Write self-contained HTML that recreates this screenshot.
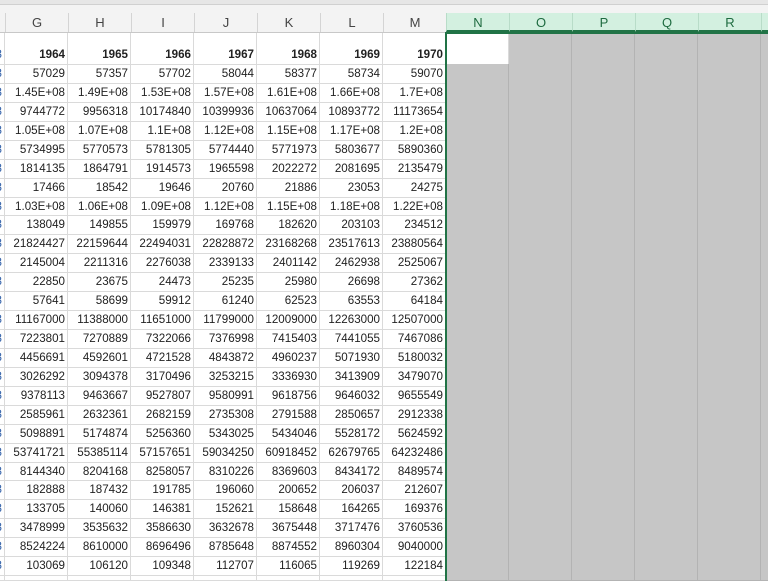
<!DOCTYPE html><html><head><style>
html,body{margin:0;width:768px;height:581px;overflow:hidden}
body{background:#fff;font-family:"Liberation Sans",sans-serif;position:relative}
#topbar{position:absolute;left:0;top:0;width:768px;height:4px;background:#e6e6e6;border-bottom:1px solid #d0d0d0}
#hdr{position:absolute;left:0;top:5px;width:768px;height:27px;background:#f3f3f3;border-bottom:1px solid #c8c8c8}
.h{position:absolute;top:13px;height:19px;width:62px;border-left:1px solid #d4d4d4;text-align:center;font-size:13px;line-height:19px;color:#444}
.hg{background:#d3f0e0;border-bottom:2px solid #217346;height:17px;color:#1e6b40;border-left-color:#b8dcc8}
.c{position:absolute;box-sizing:border-box;border-right:1px solid #dadada;border-bottom:1px solid #dadada;text-align:right;padding-right:2px;font-size:11.6px;overflow:hidden;white-space:nowrap;color:#222}
.b{font-weight:bold}
.f{color:#2f5fa8}
.g{background:#c6c6c6;border-color:#b3b3b3}
#sel{position:absolute;left:445px;top:32px;width:2px;height:549px;background:#217346}
#selt{position:absolute;left:445px;top:32px;width:323px;height:2px;background:#217346}
</style></head><body>
<div id="topbar"></div><div id="hdr"></div>
<div class="h" style="left:5px">G</div><div class="h" style="left:68px">H</div><div class="h" style="left:131px">I</div><div class="h" style="left:194px">J</div><div class="h" style="left:257px">K</div><div class="h" style="left:320px">L</div><div class="h" style="left:383px">M</div>
<div class="h hg" style="left:446px">N</div><div class="h hg" style="left:509px">O</div><div class="h hg" style="left:572px">P</div><div class="h hg" style="left:635px">Q</div><div class="h hg" style="left:698px">R</div><div class="h hg" style="left:761px"></div>
<div id="grid"></div>
<div id="sel"></div><div id="selt"></div>
<script>
(function(){
var d=`1964 1965 1966 1967 1968 1969 1970
57029 57357 57702 58044 58377 58734 59070
1.45E+08 1.49E+08 1.53E+08 1.57E+08 1.61E+08 1.66E+08 1.7E+08
9744772 9956318 10174840 10399936 10637064 10893772 11173654
1.05E+08 1.07E+08 1.1E+08 1.12E+08 1.15E+08 1.17E+08 1.2E+08
5734995 5770573 5781305 5774440 5771973 5803677 5890360
1814135 1864791 1914573 1965598 2022272 2081695 2135479
17466 18542 19646 20760 21886 23053 24275
1.03E+08 1.06E+08 1.09E+08 1.12E+08 1.15E+08 1.18E+08 1.22E+08
138049 149855 159979 169768 182620 203103 234512
21824427 22159644 22494031 22828872 23168268 23517613 23880564
2145004 2211316 2276038 2339133 2401142 2462938 2525067
22850 23675 24473 25235 25980 26698 27362
57641 58699 59912 61240 62523 63553 64184
11167000 11388000 11651000 11799000 12009000 12263000 12507000
7223801 7270889 7322066 7376998 7415403 7441055 7467086
4456691 4592601 4721528 4843872 4960237 5071930 5180032
3026292 3094378 3170496 3253215 3336930 3413909 3479070
9378113 9463667 9527807 9580991 9618756 9646032 9655549
2585961 2632361 2682159 2735308 2791588 2850657 2912338
5098891 5174874 5256360 5343025 5434046 5528172 5624592
53741721 55385114 57157651 59034250 60918452 62679765 64232486
8144340 8204168 8258057 8310226 8369603 8434172 8489574
182888 187432 191785 196060 200652 206037 212607
133705 140060 146381 152621 158648 164265 169376
3478999 3535632 3586630 3632678 3675448 3717476 3760536
8524224 8610000 8696496 8785648 8874552 8960304 9040000
103069 106120 109348 112707 116065 119269 122184
`.split("\n");
var g=document.getElementById("grid");
function cell(cls,y,ht,lh,left,w,txt){
 var e=document.createElement("div");e.className=cls;
 e.style.top=y+"px";e.style.height=ht+"px";e.style.lineHeight=lh+"px";
 e.style.left=left+"px";e.style.width=w+"px";e.textContent=txt;g.appendChild(e);}
for(var i=0;i<29;i++){var v=d[i]?d[i].split(" "):[];
 var y,ht;
 if(i==0){y=33;ht=32;}else{y=Math.round(64+(i-1)*18.93);ht=Math.round(64+i*18.93)-y+1;}
 if(y+ht>581)ht=581-y;
 var lh=(i==0?ht*2-20:Math.round(64+i*18.93)-y+1);
 cell("c f",y,ht,lh,-20,25,i<28?"3":"");
 for(var j=0;j<7;j++)cell("c"+(i==0?" b":""),y,ht,lh,5+63*j,63,v[j]||"");
 for(var k=0;k<6;k++)cell("c"+(i==0&&k==0?"":" g"),y,ht,lh,446+63*k,63,"");
}
})();
</script>
</body></html>
